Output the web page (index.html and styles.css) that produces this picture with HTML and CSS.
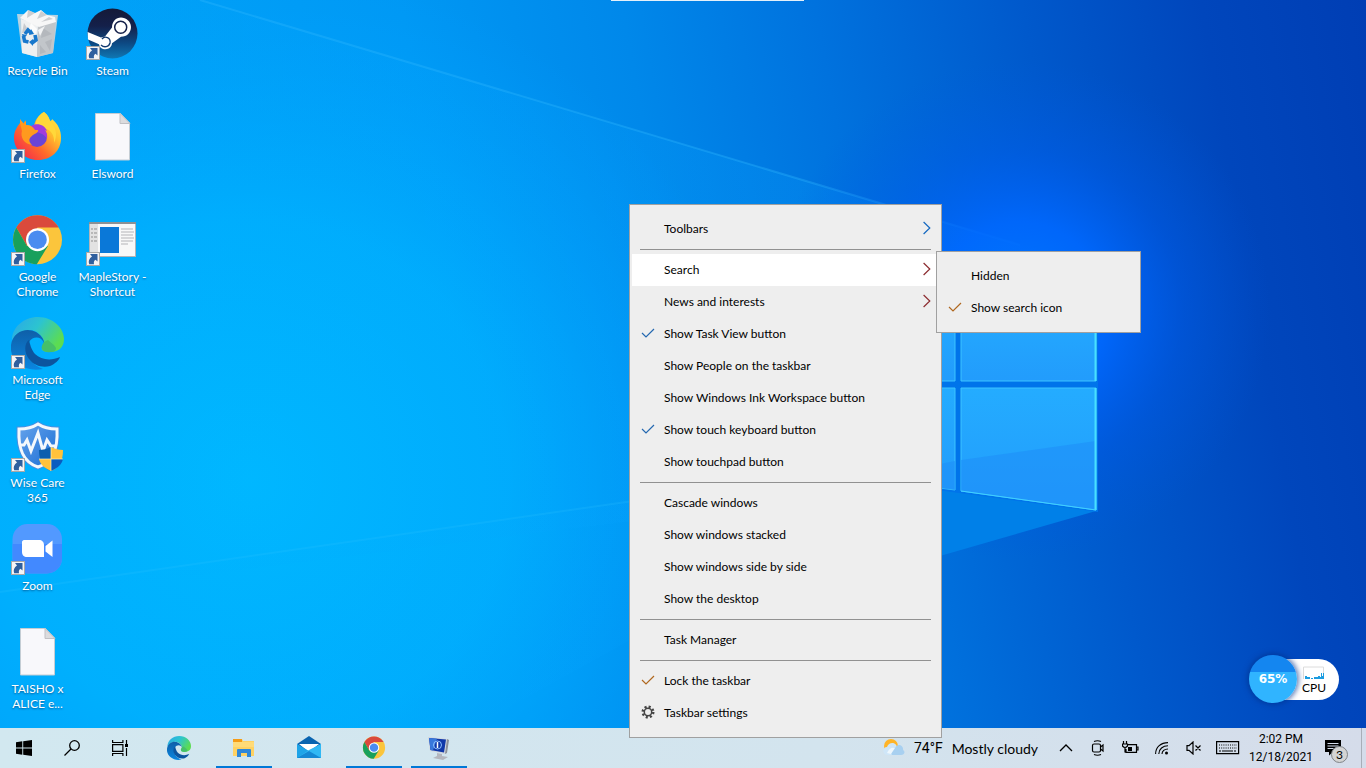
FILE: index.html
```html
<!DOCTYPE html>
<html lang="en">
<head>
    <meta charset="UTF-8">
    <title>Desktop</title>
    <link rel="stylesheet" href="styles.css">
</head>
<body>
<!-- shared icons -->
<svg class="defs" width="0" height="0">
    <defs>
        <linearGradient id="steamBg" x1="0" y1="0" x2="0" y2="1">
            <stop offset="0" stop-color="#151a38"/><stop offset=".35" stop-color="#14204a"/><stop offset=".7" stop-color="#0d4a84"/><stop offset="1" stop-color="#1078b4"/>
        </linearGradient>
        <linearGradient id="foxBody" x1="1" y1="0" x2="0" y2="1">
            <stop offset="0" stop-color="#fff44f"/><stop offset=".3" stop-color="#ffc52e"/><stop offset=".6" stop-color="#ff6a2a"/><stop offset="1" stop-color="#f0145a"/>
        </linearGradient>
        <linearGradient id="edgeTop" x1="0" y1="0" x2="1" y2=".5">
            <stop offset="0" stop-color="#2aa6ea"/><stop offset=".5" stop-color="#2cc4d0"/><stop offset="1" stop-color="#5cdc52"/>
        </linearGradient>
        <linearGradient id="edgeSide" x1="0" y1="0" x2="0" y2="1">
            <stop offset="0" stop-color="#0f5fa8"/><stop offset="1" stop-color="#0a86e0"/>
        </linearGradient>
        <linearGradient id="shieldBg" x1="0" y1="0" x2="1" y2="1">
            <stop offset="0" stop-color="#66a4ec"/><stop offset="1" stop-color="#1a6cd4"/>
        </linearGradient>
    </defs>
    <symbol id="shortcut" viewBox="0 0 14 14">
        <rect x=".5" y=".5" width="13" height="13" fill="#f4f4f6" stroke="#a8a8a8"/>
        <path d="M4 2h7.500v7.500L9.500 7.800C8 8.600 7.600 10 8 12.200H3.200C2 9 3.200 6.200 6 4.400z" fill="#2f5f9e"/>
    </symbol>
    <symbol id="file" viewBox="0 0 53 53">
        <path d="M9.500 2.500h25l9 9.500v37h-34z" fill="#f8f8fb" stroke="#c4cdd4"/>
        <path d="M34 2.500V12.500h10z" fill="#dcdcde" stroke="#c0c0c4"/>
    </symbol>
    <symbol id="chrome" viewBox="0 0 53 53">
        <circle cx="26.500" cy="25.700" r="24.500" fill="#fbc53c"/>
        <path d="M5.300 13.500A24.500 24.500 0 0 1 47.700 13.500H26.500L15.900 31.800z" fill="#da4a3c"/>
        <path d="M5.300 13.500A24.500 24.500 0 0 0 25.800 50.200L37.100 31.800 26.500 36 15.900 31.800z" fill="#18a05c"/>
        <circle cx="26.500" cy="25.700" r="11.500" fill="#fff"/>
        <circle cx="26.500" cy="25.700" r="9.300" fill="#4a8cf0"/>
    </symbol>
    <symbol id="edge" viewBox="0 0 53 53">
        <path d="M1 23C1 10 13 0 27 0 42 0 53 11 53 22c0 9-6 13-14 13-6 0-9-2-8-4 3-3 3-8-1-12C23 9 8 12 1 23z" fill="url(#edgeTop)"/>
        <path d="M33 25c-2 3-3 5-2 7 1 3 6 3.500 10 3 3-.5 4-2 4-4-2-4-5-5-8-8z" fill="#46c068"/>
        <path d="M0 28C2 14 16 10 25 15c5 3 8 7 8 11-3-7-11-7-15-1-6 10 0 22 14 27C14 56-2 44 0 28z" fill="url(#edgeSide)"/>
        <path d="M18 23c-5 3-5 13 0 19 5 7 14 9 21 7 5-2 9-6 10-9-9 4-19 3-25-3-4-5-5-10-6-14z" fill="#0c559f"/>
    </symbol>
    <symbol id="check" viewBox="0 0 14 10">
        <path d="M1 5l4 4 8-8" fill="none" stroke="currentColor" stroke-width="1.200"/>
    </symbol>
    <symbol id="chevron" viewBox="0 0 8 14">
        <path d="M.6 1l6.200 6L.6 13" fill="none" stroke="currentColor" stroke-width="1.200"/>
    </symbol>
</svg>

<main class="desktop">
    <svg class="wallpaper" viewBox="0 0 1366 768" preserveAspectRatio="none">
        <defs>
            <linearGradient id="sky" x1="0" y1=".1" x2="1" y2="0">
                <stop offset="0" stop-color="#00a4f8"/>
                <stop offset=".3" stop-color="#0098f4"/>
                <stop offset=".46" stop-color="#0088ea"/>
                <stop offset=".6" stop-color="#0072de"/>
                <stop offset=".75" stop-color="#0059cc"/>
                <stop offset=".88" stop-color="#0046bc"/>
                <stop offset="1" stop-color="#003eb4"/>
            </linearGradient>
            <radialGradient id="haze" gradientUnits="userSpaceOnUse" cx="250" cy="480" r="520">
                <stop offset="0" stop-color="#00b8ff"/>
                <stop offset=".5" stop-color="#00b2ff" stop-opacity=".8"/>
                <stop offset="1" stop-color="#00a0ff" stop-opacity="0"/>
            </radialGradient>
            <radialGradient id="glow" gradientUnits="userSpaceOnUse" cx="1020" cy="310" r="250">
                <stop offset="0" stop-color="#0078ff"/>
                <stop offset=".35" stop-color="#0068ff" stop-opacity=".9"/>
                <stop offset=".65" stop-color="#005cf0" stop-opacity=".4"/>
                <stop offset="1" stop-color="#0058e0" stop-opacity="0"/>
            </radialGradient>
            <linearGradient id="beam" x1="0" y1="0" x2="1" y2="0">
                <stop offset="0" stop-color="#00b0ff" stop-opacity="0"/>
                <stop offset="1" stop-color="#0a9cff" stop-opacity=".6"/>
            </linearGradient>
            <linearGradient id="pane" x1="0" y1="0" x2="0" y2="1">
                <stop offset="0" stop-color="#24acff"/>
                <stop offset="1" stop-color="#229cfc"/>
            </linearGradient>
        </defs>
        <rect width="1366" height="768" fill="url(#sky)"/>
        <rect width="1366" height="768" fill="url(#haze)"/>
        <path d="M200 0L1020 245V500L800 500 0 600V0z" fill="url(#beam)" opacity=".5"/>
        <path d="M0 592L640 500 940 450V556L630 640 400 768H0z" fill="url(#beam)" opacity=".3"/>
        <path d="M200 0L1020 245" stroke="#30b8ff" stroke-width="2" opacity=".35"/>
        <path d="M0 592L640 500" stroke="#30c4ff" stroke-width="2" opacity=".2"/>
        <rect width="1366" height="768" fill="url(#glow)"/>
        <path d="M940 490L1096 511 940 556z" fill="#0080e8"/>
        <path d="M930 300H1098V512L930 489z" fill="#0074ea"/>
        <g fill="url(#pane)" stroke="#3cc4ff">
            <path d="M900 300H955V381H900z"/>
            <path d="M961 300H1096V381H961z"/>
            <path d="M900 388H955V490L900 483z"/>
            <path d="M961 388H1096V510L961 491z"/>
        </g>
        <path d="M930 466L955 461V490L930 487zM961 460L1096 441V510L961 491z" fill="#1e90f8" opacity=".6"/>
        <path d="M1095.500 300V381M1095.500 388V510" fill="none" stroke="#48e0ff" stroke-width="2"/>
        <path d="M1096 510L961 491" stroke="#40d0ff"/>
    </svg>

    <nav class="icons">
        <ul>
            <li><button class="shortcut">
                <svg class="shortcut-icon" viewBox="0 0 53 53">
                    <path d="M6 6l41 1-5 38-16 4-15-4z" fill="#d4dade" opacity=".85"/>
                    <path d="M10 11l17 5-1 33-15-4z" fill="#eef0f1"/>
                    <path d="M27 16l18-5-3 34-16 4z" fill="#c2c6ca"/>
                    <path d="M9 10l8-8 7 3 6-3 6 5 8 2 1 5-17 5z" fill="#f7f7f7"/>
                    <path d="M17 2l-1 8 8-5zM30 3l-4 8 10-4zM38 9l-8 5 12-3zM13 15l5 8-7 2zM32 20l9 6-11 4zM34 34l7-3-2 12zM29 37l6 7-6 2z" fill="#a9adb3" opacity=".55"/>
                    <path d="M20 15l6 6-1 5-7-5zM27 22l7-4-5 10z" fill="#fff" opacity=".8"/>
                    <g fill="none" stroke="#1878cc" stroke-width="3.600">
                        <path d="M14 26l3-4 3 3"/><path d="M12.500 28l1 5 4 1"/><path d="M24 27l1 5-4 3"/>
                    </g>
                    <path d="M20 21l3 5-5 1zM11 26l5 1-4 4zM22 31v7l-4-4z" fill="#1878cc"/>
                </svg>
                <span>Recycle Bin</span>
            </button></li>
            <li><button class="shortcut">
                <svg class="shortcut-icon" viewBox="0 0 53 53">
                    <path d="M33 1c4 3 5 6 6 9 2-1 2-1 2-2 6 5 9 11 9 19 0 13-10 22-23 22S3 39 3 27c0-7 3-11 6-15v-2l3 3 2-3v4c4 0 7 1 9 2 0-5 4-12 10-15z" fill="url(#foxBody)"/>
                    <path d="M33 1c4 3 5 6 6 9 6 6 8 14 4 22 1-8-4-14-9-14-4-1-8-3-10-2 0-5 3-12 9-15z" fill="#ffd83a"/>
                    <circle cx="26" cy="26" r="10" fill="#6b44d6"/>
                    <path d="M20 15c6-4 14-1 16 5l-2-1c3 4 2 8 2 9-3-6-9-6-13-8z" fill="#a23cdc"/>
                    <path d="M9 12V8l4 5 2-4v5c5 0 8 3 9 5h3c1 3-5 4-6 6-3 2-4 5 0 9-8-1-12-8-10-14z" fill="#ff9a1e"/>
                </svg>
                <svg class="arrow"><use href="#shortcut"/></svg>
                <span>Firefox</span>
            </button></li>
            <li><button class="shortcut">
                <svg class="shortcut-icon"><use href="#chrome"/></svg>
                <svg class="arrow"><use href="#shortcut"/></svg>
                <span>Google Chrome</span>
            </button></li>
            <li><button class="shortcut">
                <svg class="shortcut-icon"><use href="#edge"/></svg>
                <svg class="arrow"><use href="#shortcut"/></svg>
                <span>Microsoft Edge</span>
            </button></li>
            <li><button class="shortcut">
                <svg class="shortcut-icon" viewBox="0 0 53 53">
                    <path d="M27 4c6 4 12 5 19 5 1 20-4 33-19 38C12 42 7 29 8 9c7 0 13-1 19-5z" fill="url(#shieldBg)" stroke="#4a8ee0" stroke-width="5"/>
                    <path d="M27 4c6 4 12 5 19 5 1 20-4 33-19 38C12 42 7 29 8 9c7 0 13-1 19-5z" fill="url(#shieldBg)" stroke="#f4f8fc" stroke-width="3"/>
                    <path d="M9 25h4l3-5 4 11 7-18 5 18 4-11 4 6h5" fill="none" stroke="#f4f8fc" stroke-width="3"/>
                    <path d="M40 27c4 2 8 3 12 3 0 11-4 18-12 21z" fill="#ffc23c"/>
                    <path d="M40 27c-4 2-8 3-12 3 0 11 4 18 12 21z" fill="#0c5fae"/>
                    <path d="M28 39h12v12c-7-3-11-7-12-12z" fill="#ffc23c"/>
                    <path d="M40 39h12c-1 5-5 9-12 12z" fill="#0a5cc0"/>
                    <path d="M40 27v24M28 39h24" stroke="#fff0b0" stroke-width=".7"/>
                </svg>
                <svg class="arrow"><use href="#shortcut"/></svg>
                <span>Wise Care 365</span>
            </button></li>
            <li><button class="shortcut">
                <svg class="shortcut-icon" viewBox="0 0 53 53">
                    <rect x="1.500" y="1" width="49.500" height="49.500" rx="15" fill="#5299ff"/>
                    <path d="M1.500 21H51v14.500a15 15 0 0 1-15 15H16.500a15 15 0 0 1-15-15z" fill="#4289ff"/>
                    <path d="M13 17h15c3 0 5 2 5 5v12H16c-3 0-5-2-5-5V19c0-1 1-2 2-2zM34.500 23l7-5.500V34l-7-5.500z" fill="#fff"/>
                </svg>
                <svg class="arrow"><use href="#shortcut"/></svg>
                <span>Zoom</span>
            </button></li>
            <li><button class="shortcut">
                <svg class="shortcut-icon"><use href="#file"/></svg>
                <span>TAISHO x ALICE e...</span>
            </button></li>
        </ul>
        <ul>
            <li><button class="shortcut">
                <svg class="shortcut-icon" viewBox="0 0 53 53">
                    <circle cx="26.500" cy="25.500" r="25" fill="url(#steamBg)"/>
                    <path d="M1.600 24L15 29.500l4-1 7-9c0-6 4-10 9-10s10 4 10 9.500-4 9.800-10 9.800l-9 6.500c0 3-3 6-6.500 6s-6-2-6.500-5L2 31.500z" fill="#fff"/>
                    <circle cx="34.700" cy="19.300" r="6" fill="#fff" stroke="#14204a" stroke-width="1.500"/>
                    <path d="M16 31c3-4 9-1 8 4-1 4-6 5-9 2" fill="none" stroke="#123a70" stroke-width="1.300"/>
                </svg>
                <svg class="arrow"><use href="#shortcut"/></svg>
                <span>Steam</span>
            </button></li>
            <li><button class="shortcut">
                <svg class="shortcut-icon"><use href="#file"/></svg>
                <span>Elsword</span>
            </button></li>
            <li><button class="shortcut">
                <svg class="shortcut-icon" viewBox="0 0 53 53">
                    <rect x="3.500" y="8.500" width="46" height="34" fill="#f8f8f8" stroke="#b4b4b8"/>
                    <path d="M3 9h47" stroke="#8c9094" stroke-width="2"/>
                    <path d="M4 10h8v32H4z" fill="#e2e2e2"/>
                    <path d="M5 15h2m1 0h3M5 19h2m1 0h3M5 23h2m1 0h3M5 27h2m1 0h3" stroke="#8f8f8f"/>
                    <path d="M14 13h19v26H14z" fill="#0a78d8"/>
                    <path d="M35 15h12M35 18h13M35 21h12M35 24h13M35 27h12M35 30h7" stroke="#b4b4b8"/>
                </svg>
                <svg class="arrow"><use href="#shortcut"/></svg>
                <span>MapleStory - Shortcut</span>
            </button></li>
        </ul>
    </nav>

    <div class="top-edge"></div>

    <!-- cpu monitor -->
    <div class="monitor">
        <div class="monitor-load">65%</div>
        <div class="monitor-cpu">
            <svg width="22" height="14" viewBox="0 0 22 14">
                <path d="M.5 13V1h20v6" fill="none" stroke="#dcdcdc"/>
                <path d="M2 13v-3h2v1h3v2zM8 12h2v1H8zM11 11h4v2h-4zM15 10h2v1h1V7h1v3h1V7h1v6h-6z" fill="#1c9ce0"/>
            </svg>
            <span>CPU</span>
        </div>
    </div>
</main>

<footer class="taskbar">
    <button class="task" aria-label="Start">
        <svg width="16" height="16" viewBox="0 0 16 16"><path d="M0 2.200L6.300 1.300V7.500H0zM7.200 1.200L16 0V7.500H7.200zM0 8.500h6.300v6.200L0 13.800zM7.200 8.500H16V16L7.200 14.800z"/></svg>
    </button>
    <button class="task" aria-label="Search">
        <svg width="16" height="16" viewBox="0 0 16 16" fill="none" stroke="#000" stroke-width="1.300"><circle cx="10.500" cy="5.500" r="4.800"/><path d="M7 9L.5 15.500"/></svg>
    </button>
    <button class="task" aria-label="Task View">
        <svg width="16" height="16" viewBox="0 0 16 16" fill="none" stroke="#000" stroke-width="1.200"><path d="M.6 0v2.500h10.300V0M.6 16v-2.500h10.300V16M.6 4.600h10.300v6.800H.6zM14.500 0v4M14.500 8v8"/><path d="M13 4h3v3h-3z" fill="#000" stroke="none"/></svg>
    </button>
    <div class="pinned">
        <button class="app" aria-label="Edge"><svg width="24" height="24"><use href="#edge"/></svg></button>
        <button class="app open" aria-label="File Explorer">
            <svg width="24" height="24" viewBox="0 0 24 24">
                <path d="M1 3h9l1 2h11v15H1z" fill="#ffd262"/><path d="M1 3h9v3H1z" fill="#f59c16"/>
                <path d="M1 6h21v5H1z" fill="#ffdb78"/><path d="M5 21v-7q0-1 1-1h12q1 0 1 1v7h-4v-4H9v4z" fill="#2f88d8"/>
            </svg>
        </button>
        <button class="app" aria-label="Mail">
            <svg width="24" height="24" viewBox="0 0 24 24">
                <path d="M0 8L12 0l12 8-6 6H6z" fill="#0a64b0"/><path d="M2 8h20l-10 8z" fill="#fff"/>
                <path d="M0 8l12 7 12-7v14H0z" fill="#1ea4e8"/><path d="M0 22l12-8L24 8v14z" fill="#30b8f4"/><path d="M0 22l12-7 12 7z" fill="#1488d4"/>
            </svg>
        </button>
        <button class="app open" aria-label="Chrome"><svg width="24" height="24"><use href="#chrome"/></svg></button>
        <button class="app open" aria-label="System tool">
            <svg width="24" height="24" viewBox="0 0 24 24">
                <path d="M1 1l19 2-2 15L3 15z" fill="#d2d5dc"/><path d="M20 3l2 1-2 13-2 1z" fill="#8c9098"/>
                <path d="M2 2l17 1.500L17 16.500 3.500 14z" fill="#1038a8"/><path d="M2 2l8 .7L6 14.500l-2.500-.5z" fill="#3878dc"/>
                <circle cx="10.500" cy="9" r="4" fill="none" stroke="#8cc0ff"/><path d="M10.500 6v6" stroke="#fff" stroke-width="1.500"/>
                <path d="M10 17l5 1v2l6 1-5 3-10-2 4-2z" fill="#b4b6be"/>
            </svg>
        </button>
    </div>

    <div class="tray">
        <button class="weather">
            <svg width="22" height="20" viewBox="0 0 22 20">
                <circle cx="8" cy="8" r="7" fill="#ffb428"/>
                <path d="M5 17C-1 17-1 9 4 9c2-6 10-5 10 1 6-2 8 7 2 7z" fill="#cfe6f8"/>
                <path d="M9 17c-3-4 0-8 3-7 3-6 9-2 8 2 3 2 1 5-2 5z" fill="#a8d0f0"/>
                <path d="M4 15c2-4 4-6 8-5l-4 6z" fill="#eef7fd"/>
            </svg>
            <span class="digits">74°F</span>
            <span>Mostly cloudy</span>
        </button>
        <button class="tray-icon" aria-label="Show hidden icons">
            <svg width="14" height="14" viewBox="0 0 14 14"><path d="M1 10l6-6 6 6" fill="none" stroke="#000" stroke-width="1.300"/></svg>
        </button>
        <button class="tray-icon" aria-label="Meet now">
            <svg width="14" height="16" viewBox="0 0 14 16" fill="none" stroke="#000" stroke-width="1.200"><rect x="1.500" y="4" width="8" height="8" rx="1.500"/><path d="M9.500 7l2.500-2v6L9.500 9M3 1.500q3.500-1.500 7 0M3 14.500q3.500 1.500 7 0"/></svg>
        </button>
        <button class="tray-icon" aria-label="Battery">
            <svg width="17" height="14" viewBox="0 0 17 14" fill="none" stroke="#000" stroke-width="1.200"><path d="M6 3.600h8.500v7.800H4V8M14.500 6H16v3h-1.500M1.500 0v3M4.500 0v3M.5 3h5v2q-2.500 3-5 0zM3 6v5h1"/><path d="M6 6h4v4H6z" fill="#000" stroke="none"/></svg>
        </button>
        <button class="tray-icon" aria-label="Network">
            <svg width="14" height="14" viewBox="0 0 14 14" fill="none" stroke="#000" stroke-width="1.100"><path d="M.6 13C.6 6 6 1.600 13 1.600M3.800 13C3.800 8 8 4.800 13 4.800M7 13C7 10 9.500 8 13 8"/><circle cx="11.500" cy="12" r="1.500" fill="#000" stroke="none"/></svg>
        </button>
        <button class="tray-icon" aria-label="Volume muted">
            <svg width="16" height="14" viewBox="0 0 16 14" fill="none" stroke="#000" stroke-width="1.200"><path d="M1 4.600h2L7 1v12L3 9.400H1zM9.500 4.500l5 5M14.500 4.500l-5 5"/></svg>
        </button>
        <button class="tray-icon tray-icon-wide" aria-label="Touch keyboard">
            <svg width="24" height="14" viewBox="0 0 24 14" fill="none" stroke="#000" stroke-width="1.200"><path d="M.6.6h22v12H.6z"/><path d="M3 4h18M3 7h18" stroke-dasharray="1 1.200"/><path d="M3 10h2M6 10h11M18 10h2"/></svg>
        </button>
        <button class="clock digits">
            <time>2:02 PM</time>
            <time>12/18/2021</time>
        </button>
        <button class="notifications" aria-label="Notifications">
            <svg width="16" height="16" viewBox="0 0 16 16"><path d="M0 0h16v12H8l-4 3.500V12H0z"/><path d="M2.500 3.500h11M2.500 6h11M2.500 8.500h6" stroke="#d5dcea"/></svg>
            <span class="badge">3</span>
        </button>
        <button class="show-desktop" aria-label="Show desktop"></button>
    </div>
</footer>

<!-- taskbar context menu -->
<ul class="menu taskbar-menu">
    <li><button>Toolbars<svg class="chevron"><use href="#chevron"/></svg></button></li>
    <li class="separator"></li>
    <li class="has-submenu"><button class="current">Search<svg class="chevron warm"><use href="#chevron"/></svg></button>
        <ul class="menu submenu">
            <li><button>Hidden</button></li>
            <li><button><svg class="mark warm"><use href="#check"/></svg>Show search icon</button></li>
        </ul>
    </li>
    <li><button>News and interests<svg class="chevron warm"><use href="#chevron"/></svg></button></li>
    <li><button><svg class="mark"><use href="#check"/></svg>Show Task View button</button></li>
    <li><button>Show People on the taskbar</button></li>
    <li><button>Show Windows Ink Workspace button</button></li>
    <li><button><svg class="mark"><use href="#check"/></svg>Show touch keyboard button</button></li>
    <li><button>Show touchpad button</button></li>
    <li class="separator"></li>
    <li><button>Cascade windows</button></li>
    <li><button>Show windows stacked</button></li>
    <li><button>Show windows side by side</button></li>
    <li><button>Show the desktop</button></li>
    <li class="separator"></li>
    <li><button>Task Manager</button></li>
    <li class="separator"></li>
    <li><button><svg class="mark warm"><use href="#check"/></svg>Lock the taskbar</button></li>
    <li><button>
        <svg class="mark gear" viewBox="0 0 14 14"><circle cx="7" cy="7" r="5.300" fill="none" stroke="#444" stroke-width="2.400" stroke-dasharray="2.080"/><circle cx="7" cy="7" r="3.700" fill="none" stroke="#444" stroke-width="1.500"/></svg>
        Taskbar settings</button></li>
</ul>
</body>
</html>
```
FILE: styles.css
```css
*{
    margin: 0;
    padding: 0;
    box-sizing: border-box;
    list-style: none;
}
html,body{
    height: 100%;
}
body{
    position: relative;
    display: flex;
    flex-direction: column;
    overflow: hidden;
    font-family: Lato, "Open Sans", sans-serif;
    font-size: 12px;
    color: #000;
}
button{
    border: 0;
    background: none;
    font: inherit;
    color: inherit;
}
svg{
    flex: none;
    display: block;
}
.defs{
    position: absolute;
}

/* desktop */
.desktop{
    position: relative;
    flex: 1;
    min-height: 0;
}
.wallpaper{
    position: absolute;
    left: 0;
    top: 0;
    width: 100%;
    height: 100vh;
}
.icons{
    position: relative;
    display: flex;
}
.icons ul{
    width: 75px;
}
.icons li{
    height: 103px;
}
.shortcut{
    position: relative;
    display: flex;
    flex-direction: column;
    align-items: center;
    gap: 2px;
    width: 75px;
    padding-top: 8px;
    line-height: 15px;
    color: #fff;
    text-shadow: 0 1px 2px rgba(0,40,90,.6);
}
.shortcut-icon{
    width: 53px;
    height: 53px;
}
.arrow{
    position: absolute;
    left: 11px;
    top: 46px;
    width: 14px;
    height: 14px;
}
.top-edge{
    position: absolute;
    left: 611px;
    top: 0;
    width: 193px;
    height: 1px;
    background: #e4f0fa;
}

/* cpu monitor */
.monitor{
    position: absolute;
    right: 27px;
    bottom: 25px;
    display: flex;
    align-items: center;
}
.monitor-load{
    position: relative;
    z-index: 1;
    width: 48px;
    height: 48px;
    border-radius: 50%;
    background: linear-gradient(#1486f0 36%, #30b4ff 36%);
    box-shadow: 0 0 5px 2px rgba(0,50,140,.6);
    font: bold 12px/48px "DejaVu Sans", sans-serif;
    text-align: center;
    color: #fff;
}
.monitor-cpu{
    display: flex;
    flex-direction: column;
    align-items: center;
    width: 66px;
    height: 41px;
    margin-left: -24px;
    padding: 7px 0 0 16px;
    border-radius: 0 21px 21px 0;
    background: #fff;
    line-height: 15px;
}

/* taskbar */
.taskbar{
    position: relative;
    display: flex;
    height: 40px;
    background: linear-gradient(90deg, #d2e8f0, #d3e4ee 60%, #d5dcea);
}
.taskbar button{
    display: flex;
    align-items: center;
    justify-content: center;
}
.task{
    width: 48px;
}
.pinned{
    display: flex;
    gap: 9px;
    padding-left: 7px;
}
.app{
    width: 56px;
    border-top: 2px solid transparent;
    border-bottom: 2px solid transparent;
}
.app.open{
    border-bottom-color: #0078d7;
}
.tray{
    display: flex;
    margin-left: auto;
}
.tray .weather{
    gap: 9px;
    padding-right: 12px;
    font-size: 14px;
}
.tray .digits{
    font-family: Roboto, sans-serif;
}
.tray-icon{
    width: 32px;
}
.tray-icon-wide{
    width: 36px;
}
.taskbar .clock{
    flex-direction: column;
    width: 70px;
    line-height: 18px;
}
.notifications{
    position: relative;
    width: 45px;
    padding-right: 11px;
}
.badge{
    position: absolute;
    left: 15px;
    top: 18px;
    width: 17px;
    height: 17px;
    border: 1px solid #808488;
    border-radius: 50%;
    background: #d4d4d4;
    line-height: 15px;
    text-align: center;
}
.show-desktop{
    width: 5px;
    border-left: 1px solid #a8aeb8;
}

/* context menus */
.menu{
    position: absolute;
    padding: 8px 2px;
    border: 1px solid #a0a0a0;
    background: #eee;
}
.taskbar-menu{
    left: 629px;
    bottom: 30px;
    width: 313px;
}
.submenu{
    left: 304px;
    top: -3px;
    width: 205px;
}
.has-submenu{
    position: relative;
}
.menu button{
    position: relative;
    display: flex;
    align-items: center;
    width: 100%;
    height: 32px;
    padding: 0 8px 2px 32px;
    text-align: left;
}
.menu .current{
    background: #fff;
}
.separator{
    height: 9px;
    padding: 4px 8px;
}
.separator::before{
    content: "";
    display: block;
    height: 1px;
    background: #919191;
}
.mark{
    position: absolute;
    left: 9px;
    width: 14px;
    height: 10px;
    color: #2468b0;
}
.chevron{
    width: 8px;
    height: 14px;
    margin-left: auto;
    color: #1468c0;
}
.mark.warm{
    color: #b06820;
}
.chevron.warm{
    color: #8c2c30;
}
.gear{
    height: 14px;
}
```
